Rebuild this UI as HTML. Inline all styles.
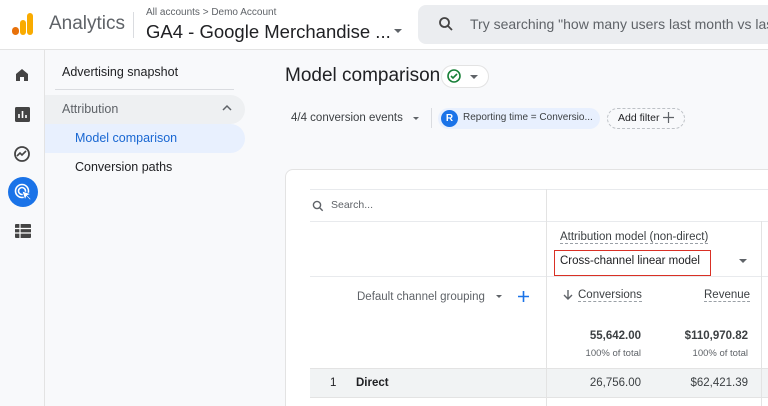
<!DOCTYPE html>
<html style="width:768px;height:406px;overflow:hidden"><head><style>
*{margin:0;padding:0;box-sizing:border-box}
body{width:768px;height:406px;overflow:hidden;background:#f8f9fb;font-family:"Liberation Sans",sans-serif;position:relative;color:#202124}
.a{position:absolute;white-space:nowrap}
</style></head><body>
<!-- top bar -->
<div class="a" style="left:0;top:0;width:768px;height:50px;background:#fff;border-bottom:1px solid #e3e3e3"></div>
<div class="a" style="left:12px;top:27px;width:7px;height:8px;background:#e8710a;border-radius:3.5px"></div>
<div class="a" style="left:20px;top:20px;width:6px;height:15px;background:#f9ab00;border-radius:3px"></div>
<div class="a" style="left:27px;top:13px;width:6px;height:22px;background:#f9ab00;border-radius:3px"></div>
<div class="a" style="left:49px;top:13px;font-size:19px;color:#5f6368">Analytics</div>
<div class="a" style="left:133px;top:12px;width:1px;height:26px;background:#dadce0"></div>
<div class="a" style="left:146px;top:7px;font-size:10px;color:#5f6368">All accounts &gt; Demo Account</div>
<div class="a" style="left:146px;top:21px;font-size:18.5px;color:#202124">GA4 - Google Merchandise ...</div>
<div class="a" style="left:394px;top:29px;border:4px solid transparent;border-top:4px solid #5f6368"></div>
<div class="a" style="left:418px;top:5px;width:360px;height:39px;background:#ebedf0;border-radius:8px"></div>
<svg class="a" style="left:438px;top:16px" width="16" height="16" viewBox="0 0 16 16"><circle cx="6.5" cy="6.5" r="4.5" fill="none" stroke="#444" stroke-width="1.8"/><path d="M10 10l4 4" stroke="#444" stroke-width="1.8"/></svg>
<div class="a" style="left:470px;top:16px;font-size:14px;color:#5f6368">Try searching "how many users last month vs las</div>
<!-- left rail -->
<div class="a" style="left:44px;top:50px;width:1px;height:356px;background:#e3e3e3"></div>
<svg class="a" style="left:14px;top:67px" width="16" height="16" viewBox="0 0 16 16"><path d="M2 7L8 2l6 5v7h-4v-4H6v4H2z" fill="#444"/></svg>
<svg class="a" style="left:15px;top:107px" width="15" height="15"><rect width="15" height="15" rx="1.5" fill="#444"/><path d="M4 11V7M7.5 11V4M11 11V8" stroke="#fff" stroke-width="1.6"/></svg>
<svg class="a" style="left:13px;top:145px" width="18" height="18" viewBox="0 0 18 18"><circle cx="9" cy="9" r="7" fill="none" stroke="#444" stroke-width="1.8"/><path d="M4 11l3-3 2 2 4-4" fill="none" stroke="#444" stroke-width="1.6"/></svg>
<div class="a" style="left:8px;top:177px;width:30px;height:30px;border-radius:50%;background:#1a73e8"></div>
<svg class="a" style="left:13px;top:182px" width="20" height="20" viewBox="0 0 20 20"><circle cx="9" cy="9" r="6.5" fill="none" stroke="#fff" stroke-width="1.6"/><circle cx="9" cy="9" r="3.5" fill="none" stroke="#fff" stroke-width="1.6"/><path d="M9 9l3 9 1.5-3.5 3.5 3.5 1-1-3.5-3.5L18 12z" fill="#fff" stroke="#1a73e8" stroke-width=".8"/></svg>
<svg class="a" style="left:15px;top:224px" width="16" height="14"><rect width="16" height="14" rx="1" fill="#444"/><path d="M0 4.5h16M0 9h16M5 0v14" stroke="#fff" stroke-width="1.2"/></svg>
<!-- nav -->
<div class="a" style="left:62px;top:65px;font-size:12.5px">Advertising snapshot</div>
<div class="a" style="left:55px;top:89px;width:179px;height:1px;background:#dadce0"></div>
<div class="a" style="left:45px;top:95px;width:200px;height:29px;background:#eef0f2;border-radius:0 15px 15px 0"></div>
<div class="a" style="left:62px;top:102px;font-size:12.5px;color:#5f6368">Attribution</div>
<svg class="a" style="left:222px;top:104px" width="10" height="8"><path d="M1 6l4-4 4 4" fill="none" stroke="#5f6368" stroke-width="1.5"/></svg>
<div class="a" style="left:45px;top:124px;width:200px;height:29px;background:#e8f0fe;border-radius:0 15px 15px 0"></div>
<div class="a" style="left:75px;top:131px;font-size:12.5px;color:#1967d2">Model comparison</div>
<div class="a" style="left:75px;top:160px;font-size:12.5px">Conversion paths</div>
<!-- header -->
<div class="a" style="left:285px;top:65px;font-size:19px">Model comparison</div>
<div class="a" style="left:441px;top:65px;width:48px;height:23px;border:1px solid #e3e3e3;border-radius:12px;background:#fff"></div>
<svg class="a" style="left:446px;top:68px" width="16" height="16"><circle cx="8" cy="8" r="6" fill="none" stroke="#188038" stroke-width="1.6"/><path d="M5 8l2 2 4-4" fill="none" stroke="#188038" stroke-width="1.6"/></svg>
<div class="a" style="left:470px;top:75px;border:4px solid transparent;border-top:4px solid #5f6368"></div>
<div class="a" style="left:291px;top:112px;font-size:11.5px;color:#3c4043">4/4 conversion events</div>
<div class="a" style="left:413px;top:117px;border:3.5px solid transparent;border-top:3.5px solid #5f6368"></div>
<div class="a" style="left:431px;top:108px;width:1px;height:20px;background:#dadce0"></div>
<div class="a" style="left:438px;top:108px;width:162px;height:21px;background:#e8f0fe;border-radius:11px"></div>
<div class="a" style="left:441px;top:110px;width:17px;height:17px;border-radius:50%;background:#1a73e8;color:#fff;font-size:10px;font-weight:bold;text-align:center;line-height:17px">R</div>
<div class="a" style="left:463px;top:112px;font-size:10px;color:#3c4043">Reporting time = Conversio...</div>
<div class="a" style="left:607px;top:108px;width:78px;height:21px;border:1px dashed #bdc1c6;border-radius:11px"></div>
<div class="a" style="left:618px;top:112px;font-size:10.5px">Add filter</div>
<svg class="a" style="left:663px;top:112px" width="11" height="11"><path d="M5.5 0v11M0 5.5h11" stroke="#5f6368" stroke-width="1.2"/></svg>
<!-- card -->
<div class="a" style="left:285px;top:169px;width:500px;height:250px;background:#fff;border:1px solid #e3e3e3;border-radius:8px"></div>
<div class="a" style="left:310px;top:189px;width:458px;height:1px;background:#e8eaed"></div>
<div class="a" style="left:310px;top:221px;width:458px;height:1px;background:#e8eaed"></div>
<div class="a" style="left:310px;top:276px;width:458px;height:1px;background:#e8eaed"></div>
<div class="a" style="left:310px;top:368px;width:458px;height:30px;background:#f1f3f4;border-top:1px solid #e3e3e3;border-bottom:1px solid #e3e3e3"></div>
<div class="a" style="left:546px;top:189px;width:1px;height:217px;background:#e3e3e3"></div>
<div class="a" style="left:761px;top:221px;width:1px;height:185px;background:#e3e3e3"></div>
<svg class="a" style="left:312px;top:200px" width="12" height="12"><circle cx="5" cy="5" r="3.6" fill="none" stroke="#5f6368" stroke-width="1.4"/><path d="M7.7 7.7l3 3" stroke="#5f6368" stroke-width="1.4"/></svg>
<div class="a" style="left:331px;top:199px;font-size:10.5px;color:#5f6368">Search...</div>
<div class="a" style="left:560px;top:231px;font-size:11.5px;color:#3c4043;border-bottom:1px dashed #9aa0a6">Attribution model (non-direct)</div>
<div class="a" style="left:554px;top:250px;width:157px;height:26px;border:1.5px solid #d93025"></div>
<div class="a" style="left:560px;top:255px;font-size:11.5px;color:#202124">Cross-channel linear model</div>
<div class="a" style="left:739px;top:259px;border:4px solid transparent;border-top:4px solid #5f6368"></div>
<div class="a" style="left:357px;top:291px;font-size:11.5px;color:#5f6368">Default channel grouping</div>
<div class="a" style="left:496px;top:295px;border:3.5px solid transparent;border-top:3.5px solid #5f6368"></div>
<svg class="a" style="left:518px;top:291px" width="11" height="11"><path d="M5.5 0v11M0 5.5h11" stroke="#1a73e8" stroke-width="1.6"/></svg>
<svg class="a" style="left:563px;top:290px" width="10" height="11"><path d="M5 0v9M1 5l4 4 4-4" fill="none" stroke="#5f6368" stroke-width="1.4"/></svg>
<div class="a" style="left:578px;top:289px;font-size:11.5px;color:#3c4043;border-bottom:1px dashed #9aa0a6">Conversions</div>
<div class="a" style="left:704px;top:289px;font-size:11.5px;color:#3c4043;border-bottom:1px dashed #9aa0a6">Revenue</div>
<div class="a" style="right:127px;top:330px;font-size:11.5px;font-weight:bold;color:#3c4043">55,642.00</div>
<div class="a" style="right:20px;top:330px;font-size:11.5px;font-weight:bold;color:#3c4043">$110,970.82</div>
<div class="a" style="right:127px;top:348px;font-size:9.5px;color:#5f6368">100% of total</div>
<div class="a" style="right:20px;top:348px;font-size:9.5px;color:#5f6368">100% of total</div>
<div class="a" style="left:330px;top:377px;font-size:11.5px">1</div>
<div class="a" style="left:356px;top:377px;font-size:11.5px;font-weight:bold">Direct</div>
<div class="a" style="right:127px;top:377px;font-size:11.5px;color:#3c4043">26,756.00</div>
<div class="a" style="right:20px;top:377px;font-size:11.5px;color:#3c4043">$62,421.39</div>
</body></html>
